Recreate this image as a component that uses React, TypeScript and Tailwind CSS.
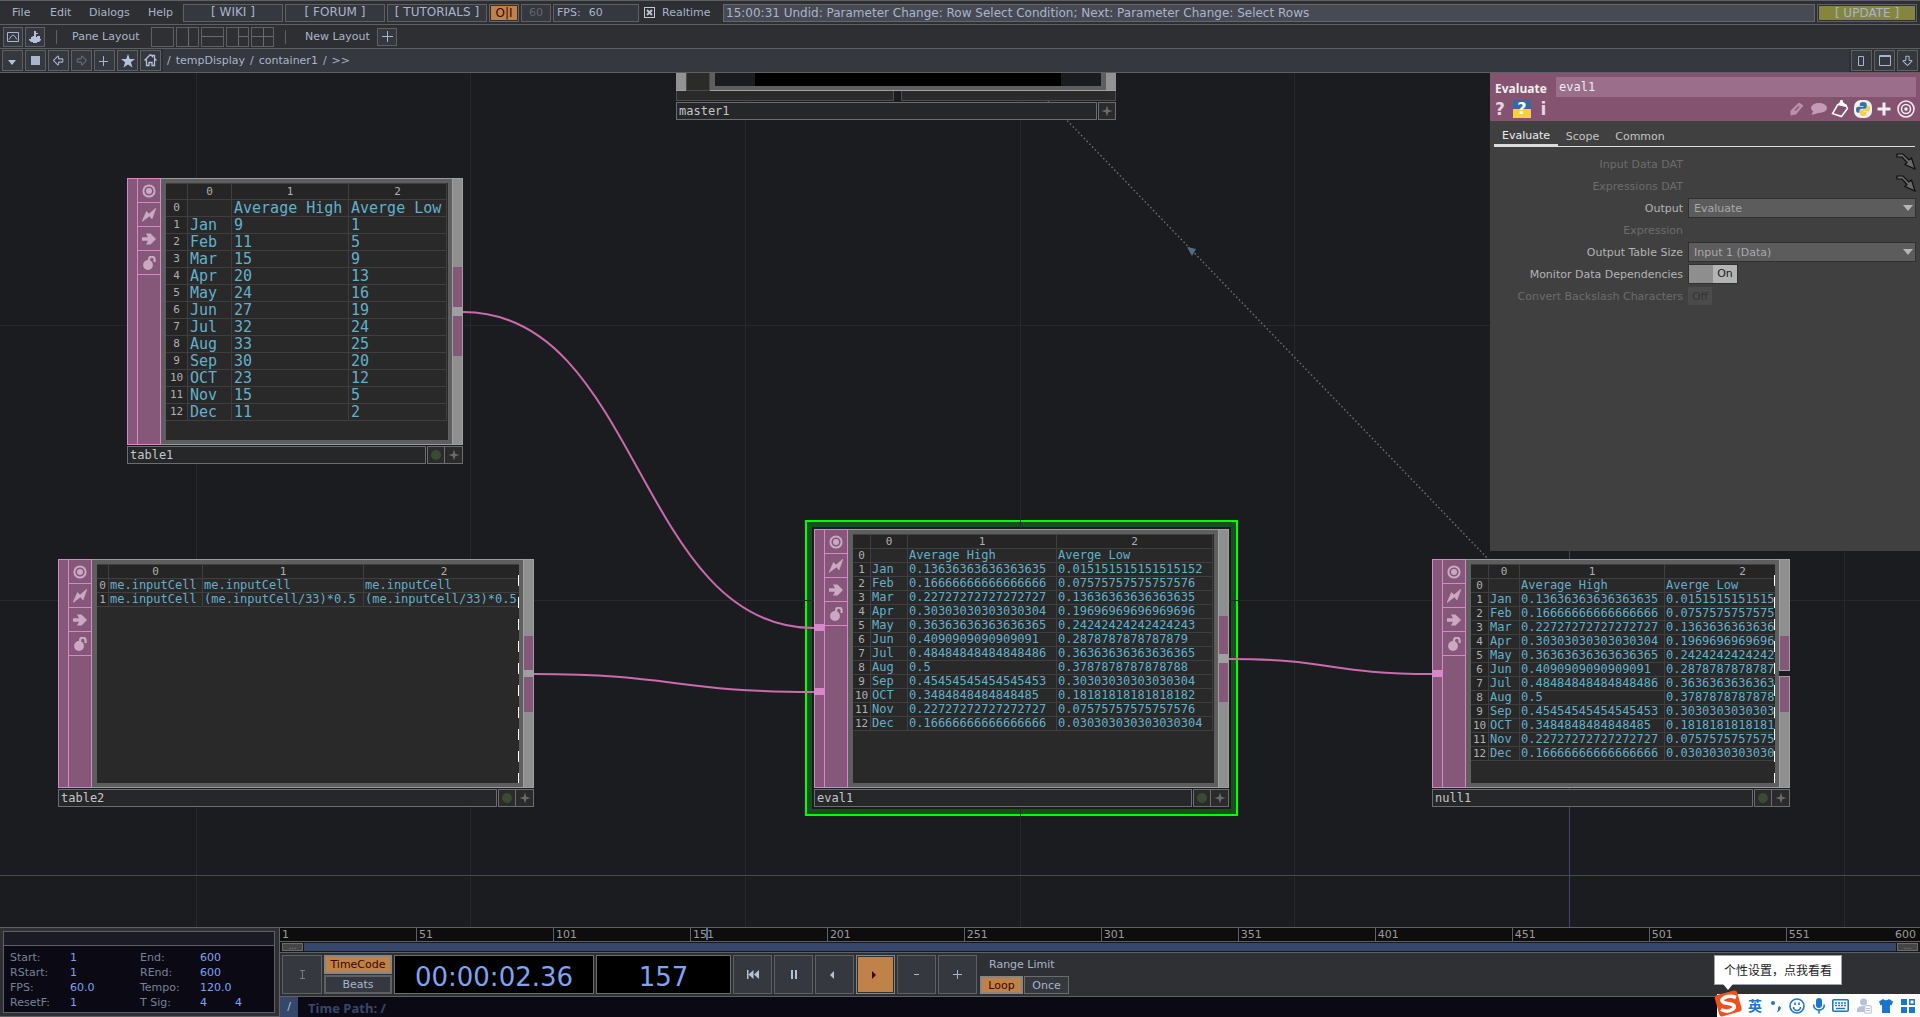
import React from "react";
import {
  ArrowBigDown,
  ArrowBigLeft,
  ArrowBigRight,
} from "lucide-react";

const high = [
  "0.13636363636363635", "0.16666666666666666", "0.22727272727272727", "0.30303030303030304",
  "0.36363636363636365", "0.4090909090909091", "0.48484848484848486", "0.5",
  "0.45454545454545453", "0.3484848484848485", "0.22727272727272727", "0.16666666666666666",
];
const low = [
  "0.015151515151515152", "0.07575757575757576", "0.13636363636363635", "0.19696969696969696",
  "0.24242424242424243", "0.2878787878787879", "0.36363636363636365", "0.3787878787878788",
  "0.30303030303030304", "0.18181818181818182", "0.07575757575757576", "0.030303030303030304",
];
const months = ["Jan", "Feb", "Mar", "Apr", "May", "Jun", "Jul", "Aug", "Sep", "OCT", "Nov", "Dec"];
const rawHigh = [9, 11, 15, 20, 24, 27, 32, 33, 30, 23, 15, 11];
const rawLow = [1, 5, 9, 13, 16, 19, 24, 25, 20, 12, 5, 2];

const heading = ["", "Average High", "Averge Low"];
const rawRows: string[][] = [heading, ...months.map((m, i) => [m, String(rawHigh[i]), String(rawLow[i])])];
const evalRows: string[][] = [heading, ...months.map((m, i) => [m, high[i], low[i]])];
const exprRows: string[][] = [
  ["me.inputCell", "me.inputCell", "me.inputCell"],
  ["me.inputCell", "(me.inputCell/33)*0.5", "(me.inputCell/33)*0.5"],
];

function DataTable({ rows, cols, large }: { rows: string[][]; cols: string[]; large?: boolean }) {
  const cell = large ? "h-[17px] text-[15px] leading-4 pl-0.5" : "h-[14px] text-[12px] leading-[13px] pl-px";
  const side = large ? "h-[17px] leading-4" : "h-[14px] leading-[13px]";
  return (
    <table className="table-fixed border-separate border-spacing-0 w-0 border-t border-[#3f3f3f]">
      <colgroup>
        {cols.map((c, i) => <col key={i} className={c} />)}
      </colgroup>
      <thead>
        <tr>
          {["", "0", "1", "2"].map((h, i) => (
            <th key={i} className={(large ? "h-[16px]" : "h-[14px]") + " bg-[#252525] border-r border-b border-[#3f3f3f] font-normal text-[11px] leading-[13px] text-[#b0b0b0]"}>{h}</th>
          ))}
        </tr>
      </thead>
      <tbody>
        {rows.map((r, i) => (
          <tr key={i}>
            <th className={side + " bg-[#252525] border-r border-b border-[#3f3f3f] font-normal text-[11px] text-[#b0b0b0]"}>{i}</th>
            {r.map((v, j) => (
              <td key={j} className={cell + " border-r border-b border-[#3f3f3f] text-[#63b0cb] whitespace-nowrap overflow-hidden"}>{v}</td>
            ))}
          </tr>
        ))}
      </tbody>
    </table>
  );
}

const flagIcons: { name: string; art: React.ReactNode }[] = [
  {
    name: "Viewer active",
    art: (
      <>
        <circle cx="7" cy="7" r="5.6" fill="none" stroke="#cba9c3" strokeWidth="2" />
        <circle cx="7" cy="7" r="3" fill="#cba9c3" />
      </>
    ),
  },
  { name: "Bypass", art: <path d="M0 13.5L4.500 3.500l2.500 2.500L14 0 10 11 7.500 8z" fill="#cba9c3" stroke="#cba9c3" strokeWidth="0.600" /> },
  { name: "Lock", art: <path d="M0 5.200h6L4 1.500h4.500L14 7l-5.500 5.500H4L6 8.800H0z" fill="#cba9c3" /> },
  {
    name: "Unlock",
    art: (
      <>
        <circle cx="6" cy="9" r="4.900" fill="#cba9c3" />
        <path d="M7 5V3.500A2.800 2.800 0 0 1 12.600 3.500V6" fill="none" stroke="#cba9c3" strokeWidth="2.200" />
      </>
    ),
  },
];

function Star() {
  return (
    <svg viewBox="0 0 12 12" className="size-3">
      <path d="M6 0.500L7.300 4.700 11.500 6 7.300 7.300 6 11.500 4.700 7.300 0.500 6 4.700 4.700z" fill="#6b6b6b" />
    </svg>
  );
}

type NodeProps = {
  name: string;
  place: string;
  body: string;
  ports: string;
  portSizes?: [string, string, string];
  inputs?: string[];
  dashed?: boolean;
  split?: boolean;
  children: React.ReactNode;
};

function OpNode({ name, place, body, ports, portSizes, inputs = [], dashed, split, children }: NodeProps) {
  const sizes = portSizes ?? ["h-[38px]", "h-[9px]", "h-[39px]"];
  return (
    <section aria-label={name} className={"absolute flex flex-col " + place}>
      <div className={"relative flex " + body}>
        <div className="w-[11px] shrink-0 border border-[#d987c8] bg-[#85587a]" />
        {inputs.map((t) => <div key={t} className={"absolute left-0 w-[11px] h-[7px] bg-[#d987c8] " + t} />)}
        <div className="w-[23px] shrink-0 flex flex-col border-y border-r border-[#d987c8] bg-[#85587a]">
          {flagIcons.map((f) => (
            <button key={f.name} aria-label={f.name} className="h-6 flex items-center justify-center border-b border-[#d987c8]">
              <svg viewBox="0 0 14 14" className="size-3.5">{f.art}</svg>
            </button>
          ))}
        </div>
        <div className="flex-1 min-w-0 border-y border-[#9a9b9d] bg-[#5e5e5e] py-1 pl-[5px] pr-[4px] flex">
          <div className="relative flex-1 min-w-0 bg-[#292929] overflow-hidden">
            {children}
            {dashed && (
              <svg className="absolute right-0 top-0 h-full w-px">
                <line x1="0.500" y1="11" x2="0.500" y2="100%" stroke="#ffffff" strokeWidth="2" strokeDasharray="11 11" />
              </svg>
            )}
          </div>
        </div>
        <div className={"w-[11px] shrink-0 flex flex-col border border-[#9fa0a2] bg-[#8f8f8f] " + ports}>
          <div className={"bg-[#85587a] " + sizes[0]} />
          <div className={(split ? "-mx-px bg-[#1b1c1f] border-y border-[#9fa0a2] " : "bg-[#9fa0a2] ") + sizes[1]} />
          <div className={"bg-[#85587a] " + sizes[2]} />
        </div>
      </div>
      <div className="relative mt-px flex h-[18px] gap-px">
        <div className="flex-1 border border-[#6c6d70] bg-[#252729] pl-0.5 text-[12px] leading-4 text-[#c6c6c6]">{name}</div>
        <div className="flex border border-[#6c6d70] bg-[#2a2b2a]">
          <span className="w-[17px] flex items-center justify-center border-r border-[#6c6d70]">
            <span className="size-2.5 rounded-full bg-[#3b4a33]" />
          </span>
          <span className="w-[17px] flex items-center justify-center"><Star /></span>
        </div>
      </div>
    </section>
  );
}

const barBtn = "border border-[#5f6063] bg-[#363840] flex items-center justify-center";

function TopBar() {
  return (
    <header className="h-[25px] flex items-center border-t border-b border-[#5f6063] px-px text-[#a9b5cb]">
      <nav className="flex items-center">
        <button className="w-[49px] pl-[11px] text-left">File</button>
        <button className="w-[39px] text-left">Edit</button>
        <button className="w-[59px] text-left">Dialogs</button>
        <button className="w-[35px] text-left">Help</button>
      </nav>
      <div className="flex gap-0.5 h-[18px]">
        <a href="#wiki" className={barBtn + " w-[100px] text-[12px]"}>[ WIKI ]</a>
        <a href="#forum" className={barBtn + " w-[100px] text-[12px]"}>[ FORUM ]</a>
        <a href="#tutorials" className={barBtn + " w-[100px] text-[12px]"}>[ TUTORIALS ]</a>
        <button className="w-[30px] border border-[#6b6661] bg-[#2e2f32] p-px flex">
          <span className="flex-1 bg-[#c08248] text-[#3b0606] text-[12px] leading-[14px]">O|I</span>
        </button>
        <button className={barBtn + " w-[30px] text-[#63666d]"}>60</button>
        <div className={barBtn + " w-[86px] justify-start! pl-[3px] gap-2"}><span>FPS:</span><span>60</span></div>
      </div>
      <label className="flex items-center gap-[7px] ml-[5px] w-[79px] shrink-0">
        <span className="relative size-[11px] shrink-0">
          <input type="checkbox" defaultChecked className="absolute inset-0 size-[11px] appearance-none border border-[#c8c8c8] bg-[#2e2f32]" />
          <svg viewBox="0 0 11 11" className="absolute inset-0 size-[11px] pointer-events-none"><path d="M3 3l5 5M8 3l-5 5" stroke="#b8c4d8" strokeWidth="2" /></svg>
        </span>
        Realtime
      </label>
      <div className="flex-1 h-[18px] border border-[#66686d] bg-[#474a53] pl-0.5 text-[12px] leading-4 whitespace-nowrap overflow-hidden">
        15:00:31 Undid: Parameter Change: Row Select Condition; Next: Parameter Change: Select Rows
      </div>
      <button className="ml-0.5 mr-0.5 w-[100px] h-[18px] border border-[#5f6063] p-px flex">
        <span className="flex-1 bg-[#84863f] text-[12px] leading-[14px]">[ UPDATE ]</span>
      </button>
    </header>
  );
}

function LayoutBar() {
  const box = "w-[23px] h-5 border border-[#5f6063] bg-[#2f3034]";
  const arts = ["", "M11.5 0V20", "M0 8.5H23", "M11.5 0V20M11.5 8.5H23", "M11.5 0V20M0 8.5H23"];
  return (
    <div className="h-6 flex items-center border-b border-[#5f6063] pl-[3px] text-[#a9b5cb]">
      <div className="flex gap-0.5">
        <button aria-label="Toggle view" className={barBtn + " w-5 h-5"}>
          <svg viewBox="0 0 12 10" className="w-3 h-2.5"><path d="M.5 .5h11v9H.5zM2 7.500L4.500 4 6 3 7.500 4 10 7.500" fill="none" stroke="#a9b5cb" /></svg>
        </button>
        <button aria-label="Palette" className={barBtn + " w-5 h-5"}>
          <svg viewBox="0 0 12 12" className="size-3"><path d="M5 0h2v2h2v1H7v3h1V5h3v3h1v1l-2 2H8v1H4v-1H2L0 9V8h2V6h2L3 5h2z" fill="#b4c1d8" /></svg>
        </button>
      </div>
      <span className="ml-[11px] w-px h-3.5 bg-[#5f6063]" />
      <span className="ml-[15px] w-[79px] whitespace-nowrap">Pane Layout</span>
      <div className="flex gap-0.5">
        {arts.map((d, i) => (
          <button key={i} aria-label={"Pane layout " + (i + 1)} className={box}>
            <svg viewBox="0 0 21 18" className="w-full h-full"><path d={d} stroke="#6a6b6f" fill="none" /></svg>
          </button>
        ))}
      </div>
      <span className="ml-[11px] w-px h-3.5 bg-[#5f6063]" />
      <span className="ml-[19px] w-[72px] whitespace-nowrap">New Layout</span>
      <button aria-label="Add layout" className={barBtn + " w-5 h-[18px]"}>
        <svg viewBox="0 0 11 11" className="size-[11px]"><path d="M5.500 0v11M0 5.500h11" stroke="#a9b5cb" /></svg>
      </button>
    </div>
  );
}

function PathBar() {
  const b = barBtn + " w-[21px] h-[21px]";
  return (
    <div className="h-6 flex items-center border-b border-[#5f6063] bg-[#363840] text-[#a9b5cb]">
      <div className="flex gap-0.5 px-0.5 bg-[#2e2f32] h-full items-center">
        <button aria-label="Pane type" className={b}><svg viewBox="0 0 10 10" className="size-2.5"><path d="M0 4h8L4 9z" fill="#b4c1d8" /></svg></button>
        <button aria-label="Stop" className={b}><span className="size-[9px] bg-[#a9b5cb]" /></button>
        <button aria-label="Back" className={b}><ArrowBigLeft className="size-[13px]" strokeWidth={2} /></button>
        <button aria-label="Forward" className={b + " text-[#6a6c72]"}><ArrowBigRight className="size-[13px]" strokeWidth={2} /></button>
        <button aria-label="Add" className={b}><svg viewBox="0 0 11 11" className="size-[11px]"><path d="M4.500 1v10M0 6.500h9" stroke="#a9b5cb" /></svg></button>
        <button aria-label="Bookmark" className={b}><svg viewBox="0 0 14 14" className="size-3.5"><path d="M7 0l1.800 5H14L9.900 8.200 11.500 13.500 7 10.400 2.500 13.500 4.100 8.200 0 5h5.200z" fill="#b4c1d8" /></svg></button>
        <button aria-label="Home" className={b}><svg viewBox="0 0 13 13" className="size-[13px]"><path d="M.5 6.500L6 1h1l1.500 1.500V1.500h2v3L12.500 6.500M2.500 5.500v6h2.500V8.500h3v3h2.500v-6" fill="none" stroke="#b4c1d8" strokeWidth="1.300" /></svg></button>
      </div>
      <nav className="flex-1 flex gap-[5px] pl-1">
        <span>/</span><a href="#tempDisplay">tempDisplay</a><span>/</span><a href="#container1">container1</a><span>/</span><span>&gt;&gt;</span>
      </nav>
      <div className="flex gap-0.5 px-0.5 bg-[#2e2f32] h-full items-center">
        <button aria-label="Link" className={b}><svg viewBox="0 0 7 10" className="w-[7px] h-2.5"><path d="M.5 .5h5v9H.5z" fill="none" stroke="#a9b5cb" /></svg></button>
        <button aria-label="Maximise" className={b}><svg viewBox="0 0 12 11" className="w-3 h-[11px]"><path d="M.5 .5h11v10H.5zM0 1.500h12" fill="none" stroke="#a9b5cb" /></svg></button>
        <button aria-label="Close" className={b}><ArrowBigDown className="size-[13px]" strokeWidth={2} /></button>
      </div>
    </div>
  );
}

function Wires() {
  return (
    <svg className="absolute inset-0 w-full h-full" fill="none">
      <g transform="translate(0 -73)">
        <path d="M196.500 73V928M470.500 73V928M745.500 73V928M1020.500 73V928M1294.500 73V928M1844.500 73V928M0 325.500H1920M0 600.500H1920" stroke="#27282f" />
        <path d="M0 875.500H1920M1569.500 73V928" stroke="#43437a" />
        <path d="M1034 86L1491 562" stroke="#6a7580" strokeWidth="1.400" strokeDasharray="1.500 2.500" />
        <path d="M1187 247l9 2-4 7z" fill="#536d85" />
        <path d="M463 312C640 312 637 628 814 628M534 674C674 674 674 692 814 692M1229 659C1330 659 1331 674 1432 674" stroke="#cc6aae" strokeWidth="2" />
      </g>
    </svg>
  );
}

function MasterNode() {
  return (
    <section aria-label="master1" className="absolute left-[676px] top-0 w-[440px]">
      <div className="flex h-[18px]">
        <div className="w-2.5 bg-[#929292] border-b border-[#9fa0a2]" />
        <div className="w-6 bg-[#2b2b2a] border border-t-0 border-[#4a4a4a]" />
        <div className="flex-1 border-b border-[#9fa0a2] flex">
          <div className="flex-1 flex justify-center border-x-[5px] border-b-4 border-[#5e5e5e] bg-[#1b1c20]">
            <div className="w-[306px] bg-black" />
          </div>
        </div>
        <div className="w-2.5 bg-[#929292] border-b border-[#9fa0a2]" />
      </div>
      <div className="flex gap-[7px] h-2.5">
        <div className="w-[218px] border border-t-0 border-[#4e4e4e] bg-[#2a2a2a]" />
        <div className="flex-1 border border-t-0 border-[#4e4e4e] bg-[#2a2a2a]" />
      </div>
      <div className="mt-px flex gap-px h-[18px]">
        <div className="flex-1 border border-[#6c6d70] bg-[#252729] pl-0.5 text-[12px] leading-4 text-[#c6c6c6]">master1</div>
        <div className="w-[18px] border border-[#6c6d70] bg-[#2a2b2a] flex items-center justify-center"><Star /></div>
      </div>
    </section>
  );
}

function OpArrow() {
  return (
    <svg viewBox="0 0 20 17" className="w-5 h-[17px]">
      <path d="M1 1h6l6 6 2.500-2L19 16 9 11.500l2-2L6 4H1z" fill="#6a6a6a" stroke="#0e0e0e" strokeWidth="1.200" />
    </svg>
  );
}

function ParamRow({ label, off, children, id }: { label: string; off?: boolean; id: string; children?: React.ReactNode }) {
  return (
    <div className="flex items-center h-[22px]">
      <label htmlFor={id} className={"w-[193px] text-right mr-[5px] shrink-0 " + (off ? "text-[#6c6c6c]" : "text-[#b4b4b4]")}>{label}</label>
      <div className="flex-1 flex">{children}</div>
    </div>
  );
}

function ParamSelect({ id, value }: { id: string; value: string }) {
  return (
    <div className="relative flex-1">
      <select id={id} className="w-full h-5 appearance-none border border-[#303030] bg-[#5c5c5c] pl-[5px] text-[#a9a9a9] rounded-none">
        <option>{value}</option>
      </select>
      <svg viewBox="0 0 10 6" className="absolute right-[3px] top-[7px] w-2.5 h-1.5 pointer-events-none"><path d="M0 0h10L5 6z" fill="#b5b5b5" /></svg>
    </div>
  );
}

function ParamPanel() {
  return (
    <aside className="absolute right-0 top-0 w-[430px] h-[478px] bg-[#404040]">
      <div className="h-12 bg-[#83536f] pt-1 pl-[5px] pr-1">
        <div className="flex items-center">
          <label htmlFor="opname" className="w-[61px] pt-0.5 font-bold text-[12px] text-[#f0f0f0] font-['Open_Sans',sans-serif]">Evaluate</label>
          <input id="opname" defaultValue="eval1" className="flex-1 min-w-0 h-5 bg-[#9b6e8b] pl-[3px] font-['DejaVu_Sans_Mono',monospace] text-[12px] text-[#ececec] outline-none" />
        </div>
        <div className="flex items-center h-6 text-[#e6d5e1]">
          <button aria-label="Help" className="w-[18px] text-left font-bold text-[17px] leading-5">?</button>
          <button aria-label="Python help" className="w-[18px] h-[18px] bg-linear-to-b from-[#36699c] from-50% to-[#f7cf41] to-50% font-bold text-[16px] leading-[18px] text-white">?</button>
          <button aria-label="Info" className="w-[25px] font-bold text-[17px] leading-5">i</button>
          <div className="ml-auto flex items-center gap-1">
            <button aria-label="Edit"><svg viewBox="0 0 14 14" className="size-3.5"><path d="M.5 13.500V8.500L9 .5l4.500 3L6 12.500z" fill="#b98fac" /><path d="M5 8.500l4-4" stroke="#83536f" strokeWidth="1.300" /></svg></button>
            <button aria-label="Comment" className="ml-0.5"><svg viewBox="0 0 17 14" className="w-[17px] h-3.5"><ellipse cx="9" cy="6" rx="8" ry="5" fill="#c39bb7" /><path d="M1.500 13l2-5 5 3z" fill="#c39bb7" /></svg></button>
            <button aria-label="Clipboard"><svg viewBox="0 0 18 18" className="size-[18px]"><path d="M6.500 5L1.500 13.500l9 3 6-8-2-4" fill="none" stroke="#fff" strokeWidth="1.500" /><path d="M5.500 5l3-2.500L9.500 0h2l.8 2.500 4 3-1 1.500z" fill="#fff" /></svg></button>
            <button aria-label="Python" className="mx-px">
              <svg viewBox="0 0 18 18" className="size-[18px]">
                <rect width="18" height="18" rx="7" fill="#f4f1f4" />
                <path d="M9 2C6.500 2 5.800 3 5.800 4.200V6H9.500v.8H4.200C2.800 6.800 2 8 2 9.700s.8 3 2.200 3h1.300V11c0-1.300 1-2.200 2.200-2.200h3.200c1.100 0 1.800-.8 1.800-1.800V4.200C12.700 2.800 11.500 2 9 2z" fill="#3573a6" />
                <path d="M9.300 16c2.500 0 3.200-1 3.200-2.200V12H8.800v-.8h5.300c1.300 0 2-1.200 2-2.900s-.8-2.900-2-2.900h-.9V7c0 1.400-1 2.400-2.200 2.400H7.800C6.700 9.400 6 10.200 6 11.200v2.600C6 15.200 7 16 9.300 16z" fill="#f9cf47" />
              </svg>
            </button>
            <button aria-label="Add"><svg viewBox="0 0 14 14" className="size-3.5"><path d="M7 .5v13M.5 7h13" stroke="#f3eaf1" strokeWidth="3" /></svg></button>
            <button aria-label="Target" className="ml-0.5 mr-px"><svg viewBox="0 0 18 18" className="size-[18px]"><circle cx="9" cy="9" r="8" fill="none" stroke="#f3eaf1" strokeWidth="1.600" /><circle cx="9" cy="9" r="4.500" fill="none" stroke="#f3eaf1" strokeWidth="1.600" /><circle cx="9" cy="9" r="1.800" fill="#f3eaf1" /></svg></button>
          </div>
        </div>
      </div>
      <div className="ml-1 mr-[5px] mt-[5px] flex border-b border-[#dcdcdc] text-[#c4c4c4]" role="tablist">
        <button role="tab" aria-selected="true" className="w-16 h-5 border-b-2 border-[#dcdcdc] text-[#ededed]">Evaluate</button>
        <button role="tab" aria-selected="false" className="w-[49px]">Scope</button>
        <button role="tab" aria-selected="false" className="w-[66px]">Common</button>
      </div>
      <div className="mt-1.5 pr-1">
        <ParamRow id="p1" label="Input Data DAT" off><button id="p1" aria-label="Go to input data" className="ml-auto mb-1.5"><OpArrow /></button></ParamRow>
        <ParamRow id="p2" label="Expressions DAT" off><button id="p2" aria-label="Go to expressions" className="ml-auto mb-1.5"><OpArrow /></button></ParamRow>
        <ParamRow id="p3" label="Output"><ParamSelect id="p3" value="Evaluate" /></ParamRow>
        <ParamRow id="p4" label="Expression" off />
        <ParamRow id="p5" label="Output Table Size"><ParamSelect id="p5" value="Input 1 (Data)" /></ParamRow>
        <ParamRow id="p6" label="Monitor Data Dependencies">
          <button id="p6" role="switch" aria-checked="true" className="flex w-[50px] h-5 border border-[#303030] bg-[#8e8e8e]">
            <span className="ml-auto w-6 h-full bg-[#b4b4b4] text-[#1c1c1c] leading-[18px]">On</span>
          </button>
        </ParamRow>
        <ParamRow id="p7" label="Convert Backslash Characters" off>
          <button id="p7" role="switch" aria-checked="false" disabled className="w-6 h-[18px] bg-[#4b4b4b] text-[#343434]">Off</button>
        </ParamRow>
      </div>
    </aside>
  );
}

const info: string[][] = [
  ["Start:", "1", "End:", "600", ""],
  ["RStart:", "1", "REnd:", "600", ""],
  ["FPS:", "60.0", "Tempo:", "120.0", ""],
  ["ResetF:", "1", "T Sig:", "4", "4"],
];
const ticks = [1, 51, 101, 151, 201, 251, 301, 351, 401, 451, 501, 551];

function Transport() {
  const t = barBtn + " w-[39px] h-full text-[#a9b5cb]";
  return (
    <footer className="relative flex h-[90px] shrink-0 border-y border-[#5f6063] bg-[#2f3033]">
      <div className="w-[280px] shrink-0 p-[3px] pr-1 border-r border-[#5f6063]">
        <div className="h-full border border-[#5f6063] bg-[#0b0a14] flex flex-col">
          <div className="h-3.5 bg-[#1b1b26] border-b border-[#5f6063] shrink-0" />
          <table className="mt-1 ml-1.5 table-fixed w-[250px]">
            <colgroup><col className="w-[60px]" /><col className="w-[70px]" /><col className="w-[60px]" /><col className="w-[35px]" /><col className="w-[25px]" /></colgroup>
            <tbody>
              {info.map((r) => (
                <tr key={r[0]} className="h-[15px]">
                  <th className="text-left font-normal text-[#75829a] p-0">{r[0]}</th>
                  <td className="text-[#7ea2f0]">{r[1]}</td>
                  <th className="text-left font-normal text-[#75829a] p-0">{r[2]}</th>
                  <td className="text-[#7ea2f0]">{r[3]}</td>
                  <td className="text-[#7ea2f0]">{r[4]}</td>
                </tr>
              ))}
            </tbody>
          </table>
        </div>
      </div>
      <div className="flex-1 min-w-0 flex flex-col">
        <div className="relative h-[14px] bg-[#0d0d0d] border-b border-[#5f6063] flex text-[#9b9b9b] leading-[13px]">
          {ticks.map((n) => <span key={n} className={(n === 551 ? "" : "flex-[50] ") + (n === 1 ? "" : "border-l border-[#5f6063] ") + "pl-0.5 min-w-0 " + (n === 551 ? "flex-[49]" : "")}>{n}</span>)}
          <span className="absolute right-1 top-0">600</span>
          <span className="absolute left-[26%] top-0 w-0.5 h-3 bg-[#5672a8]" />
        </div>
        <div className="h-[11px] flex items-center gap-px px-[2px] py-px bg-[#161719] border-b border-[#5f6063]">
          <button aria-label="Range start" className="w-[21px] h-2 border border-[#6b6b6b] bg-[#454545] text-[8px] leading-[2px] text-[#8a8a8a]">...</button>
          <div className="flex-1 h-2 bg-[#37476b]" />
          <button aria-label="Range end" className="w-[21px] h-2 border border-[#6b6b6b] bg-[#454545] text-[8px] leading-[2px] text-[#8a8a8a]">...</button>
        </div>
        <div className="h-[43px] flex gap-0.5 pl-0.5 py-[2px] items-stretch">
          <button aria-label="Interval" className={barBtn + " w-10"}><svg viewBox="0 0 5 9" className="w-[5px] h-[9px]"><path d="M0 .5h5M0 8.500h5M2.500 0v9" stroke="#777a82" /></svg></button>
          <div className="w-[68px] flex flex-col gap-px">
            <button className="flex-1 border-2 border-[#8a8581] bg-[#c08248] text-[#3b0606] leading-[15px]">TimeCode</button>
            <button className="flex-1 border-2 border-[#5f6063] bg-[#363840] text-[#a9b5cb] leading-[15px]">Beats</button>
          </div>
          <output className="w-[200px] border border-[#6b6c6e] bg-black text-[#7fa3f2] text-[26px] flex items-center justify-center pt-1.5">00:00:02.36</output>
          <output className="w-[135px] border border-[#6b6c6e] bg-black text-[#7fa3f2] text-[26px] flex items-center justify-center pt-1.5">157</output>
          <button aria-label="To start" className={t}><svg viewBox="0 0 12 9" className="w-3 h-[9px]"><path d="M0 0h1.500v9H0zM6.500 0v9L1.500 4.500zM12 0v9L7 4.500z" fill="#b4c1d8" /></svg></button>
          <button aria-label="Pause" className={t}><svg viewBox="0 0 6 9" className="w-1.5 h-[9px]"><path d="M0 0h2v9H0zM4 0h2v9H4z" fill="#b4c1d8" /></svg></button>
          <button aria-label="Reverse" className={t}><svg viewBox="0 0 12 8" className="w-3 h-2"><path d="M5 0v8L1 4z" fill="#b4c1d8" /></svg></button>
          <button aria-label="Play" className="w-[39px] border border-[#8a8581] p-px flex">
            <span className="flex-1 bg-[#c08248] flex items-center justify-center"><svg viewBox="0 0 12 8" className="w-3 h-2"><path d="M2 0v8l4-4z" fill="#3b0606" /></svg></span>
          </button>
          <button aria-label="Slower" className={t}><svg viewBox="0 0 6 9" className="w-1.5 h-[9px]"><path d="M0 4.500h5" stroke="#a9b5cb" /></svg></button>
          <button aria-label="Faster" className={t}><svg viewBox="0 0 9 9" className="size-[9px]"><path d="M4.500 0v9M0 4.500h9" stroke="#a9b5cb" /></svg></button>
          <div className="ml-px flex flex-col justify-between text-[#a9b5cb]">
            <span className="pl-[9px] pt-0.5">Range Limit</span>
            <div className="flex gap-px">
              <button className="w-[43px] h-[18px] border-2 border-[#8a8581] bg-[#c08248] text-[#3b0606] leading-[15px]">Loop</button>
              <button className="w-[45px] h-[18px] border border-[#6b6c6e] bg-[#363840] leading-[17px]">Once</button>
            </div>
          </div>
        </div>
        <div className="flex-1 border-t border-[#5f6063] bg-[#0b0a14] flex items-center">
          <span className="w-[18px] h-full bg-[#37476b] text-center text-[#b4c1d8] leading-[20px]">/</span>
          <span className="ml-2.5 pt-0.5 font-bold text-[#37476b] font-['Open_Sans',sans-serif] text-[13px]">Time Path: /</span>
        </div>
      </div>
      <ImeBar />
    </footer>
  );
}

function ImeBar() {
  return (
    <div className="absolute right-0 -bottom-px h-[62px] w-[206px] font-['Noto_Sans_CJK_SC',sans-serif]">
      <div className="w-32 h-[30px] border border-[#9aa3ad] bg-white text-center text-[12px] leading-7 text-[#222222] whitespace-nowrap">个性设置，点我看看</div>
      <svg viewBox="0 0 10 6" className="absolute left-[9px] top-[29px] w-2.5 h-1.5"><path d="M0 0h10L5 6z" fill="#ffffff" /></svg>
      <div className="absolute bottom-0 left-[3px] right-0 h-[23px] bg-white flex items-center pl-[31px] pr-[5px] justify-between text-[#1a76cc]">
        <button className="pb-0.5 text-[14px] font-bold leading-none">英</button>
        <svg viewBox="0 0 12 12" className="size-3"><circle cx="3" cy="3" r="2" fill="#1a76cc" /><path d="M9 6.500a1.500 1.500 0 0 1 1 2.500q-.5 2-2.500 2.500 1.500-1.500 1-2.500z" fill="#1a76cc" stroke="#1a76cc" /></svg>
        <svg viewBox="0 0 16 16" className="size-4" fill="none" stroke="#1a76cc" strokeWidth="1.600"><circle cx="8" cy="8" r="7" /><path d="M4.500 9a3.500 3.500 0 0 0 7 0M6 4.500v2.500M10 4.500v2.500" /></svg>
        <svg viewBox="0 0 12 16" className="w-3 h-4"><rect x="3" width="6" height="10" rx="3" fill="#1a76cc" /><path d="M.8 6.500v1a5.200 4.500 0 0 0 10.400 0v-1M6 12v3.500" fill="none" stroke="#1a76cc" strokeWidth="1.600" /></svg>
        <svg viewBox="0 0 17 13" className="w-[17px] h-[13px]"><rect x=".8" y=".8" width="15.400" height="11.400" rx="1" fill="none" stroke="#1a76cc" strokeWidth="1.600" /><path d="M3 4h11M3 6.500h11" stroke="#1a76cc" strokeWidth="1.500" strokeDasharray="2 1" /><path d="M4 9.500h9" stroke="#1a76cc" strokeWidth="1.500" /></svg>
        <svg viewBox="0 0 15 16" className="w-[15px] h-4"><circle cx="6.500" cy="4" r="3.500" fill="#b5c2d9" /><path d="M0 14V11q1-3 6.500-3 3 0 4 1v5z" fill="#b5c2d9" /><path d="M7.800 7.800h6.400v7.400H7.800z" fill="#fff" stroke="#b5c2d9" /><path d="M9 10.500h4M9 12.500h4" stroke="#b5c2d9" /></svg>
        <svg viewBox="0 0 14 14" className="size-3.5"><path d="M4 0q3 2.500 6 0l4 2.500-1.500 4L11 6v8H3V6l-1.500.5L0 2.500z" fill="#1a76cc" /></svg>
        <svg viewBox="0 0 14 14" className="size-3.5"><path d="M0 0h6v6H0zM0 8h6v6H0zM8 8h6v6H8z" fill="#1a76cc" /><path d="M8.800 .8h4.400v4.400H8.800z" fill="none" stroke="#1a76cc" strokeWidth="1.500" /></svg>
      </div>
      <svg viewBox="0 0 28 27" className="absolute left-0 bottom-0 w-7 h-[27px]">
        <path d="M3 5L20 .5q2.500-.5 3.200 2L27.500 18q.5 2.500-2 3.500L8 26.500q-2 .5-2.700-2L.8 8.500Q.3 6 3 5z" fill="#f0501e" />
        <path d="M22 7.500Q16 5 10.500 7.500C6 10 8 12.500 13 13.200c7 .8 9 3.300 6 5.800-3.500 2.500-8.500 2.300-12 .5" fill="none" stroke="#ffffff" strokeWidth="3.600" />
      </svg>
    </div>
  );
}

export default function App() {
  return (
    <div className="h-screen flex flex-col overflow-hidden bg-[#2e2f32] font-['DejaVu_Sans',Verdana,sans-serif] text-[11px] leading-[15px]">
      <TopBar />
      <LayoutBar />
      <PathBar />
      <main className="relative flex-1 min-h-0 overflow-hidden bg-[#1b1c20]">
        <div className="absolute left-[805px] top-[447px] w-[433px] h-[296px] border-2 border-[#00ff00] bg-[#154f1b] p-[5px]">
          <div className="h-full bg-[#1b1c20]" />
        </div>
        <Wires />
        <ParamPanel />
        <div className="font-['DejaVu_Sans_Mono',monospace]">
          <MasterNode />
          <OpNode name="table1" place="left-[127px] top-[105px] w-[336px]" body="h-[267px]" ports="pt-[88px]" portSizes={["h-10", "h-[9px]", "h-10"]}>
            <DataTable rows={rawRows} cols={["w-[22px]", "w-11", "w-[117px]", "w-[98px]"]} large />
          </OpNode>
          <OpNode name="table2" place="left-[58px] top-[486px] w-[476px]" body="h-[229px]" ports="pt-[76px]" portSizes={["h-[34px]", "h-[7px]", "h-[35px]"]} dashed>
            <DataTable rows={exprRows} cols={["w-3", "w-[94px]", "w-[161px]", "w-[161px]"]} />
          </OpNode>
          <OpNode name="eval1" place="left-[814px] top-[456px] w-[415px]" body="h-[259px]" ports="pt-[86px]" inputs={["top-[95px]", "top-[159px]"]}>
            <DataTable rows={evalRows} cols={["w-[18px]", "w-[37px]", "w-[149px]", "w-[156px]"]} />
          </OpNode>
          <OpNode name="null1" place="left-[1432px] top-[486px] w-[358px]" body="h-[229px]" ports="pt-[76px]" portSizes={["h-[34px]", "h-[7px]", "h-[35px]"]} inputs={["top-[111px]"]} dashed split>
            <DataTable rows={evalRows} cols={["w-[18px]", "w-[31px]", "w-[145px]", "w-[156px]"]} />
          </OpNode>
        </div>
      </main>
      <Transport />
    </div>
  );
}
